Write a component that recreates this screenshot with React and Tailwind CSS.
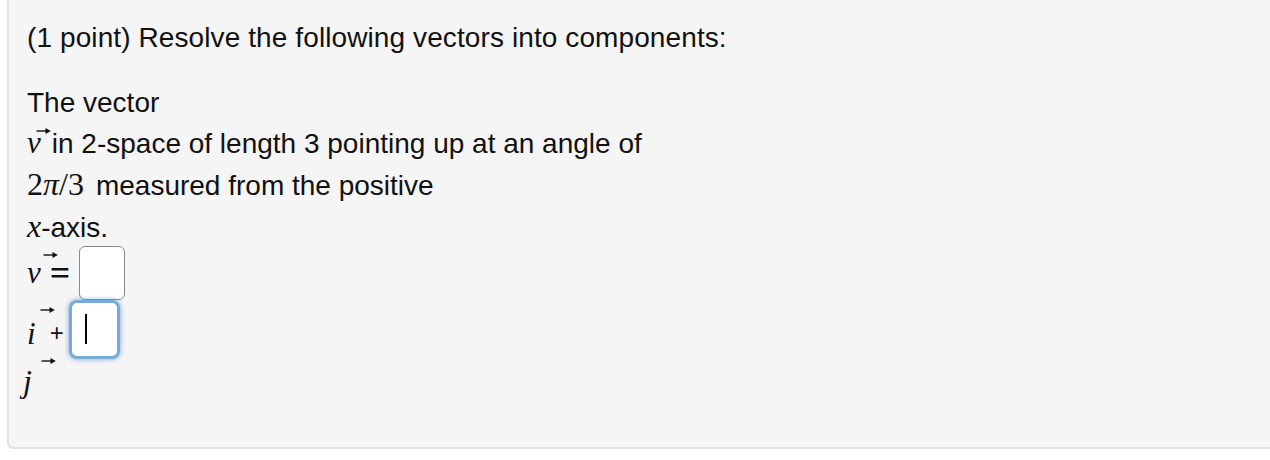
import React from 'react';

// small vector arrow, MathJax style
function Arrow({ className }) {
  return (
    <svg className={className} width="15" height="8" viewBox="0 0 15 8">
      <path d="M0.5 4H12.5" stroke="#111" strokeWidth="1.4" />
      <path d="M9.5 1L14.8 4L9.5 7Z" fill="#111" />
    </svg>
  );
}

export default function App() {
  const serif = { fontFamily: '"Liberation Serif", "Times New Roman", serif' };

  return (
    <div className="bg-white h-[460px] w-[1270px] pl-[7px]" style={{ fontFamily: '"Liberation Sans", Arial, sans-serif' }}>
      <div className="bg-[#f5f5f5] border-l-2 border-b-2 border-[#e2e2e2] rounded-bl-[6px] h-[449px] pl-[18px] pt-[18px] text-[28px] leading-[40px] text-[#111]">
        <div className="tracking-[0.1px]">(1 point) Resolve the following vectors into components:</div>

        <div className="mt-[25px]">
          <div>The vector</div>

          <div className="flex items-baseline">
            <span className="relative italic text-[31px]" style={serif}>
              v
              <Arrow className="absolute left-[9px] top-[4px]" />
            </span>
            <span className="ml-[11px]">in 2-space of length 3 pointing up at an angle of</span>
          </div>

          <div className="flex items-baseline">
            <span className="text-[32px]" style={serif}>
              2<span className="italic">π</span>/3
            </span>
            <span className="ml-[12px]">measured from the positive</span>
          </div>

          <div className="flex items-baseline">
            <span className="italic text-[32px]" style={serif}>x</span>
            <span>-axis.</span>
          </div>
        </div>

        {/* v = [ ] */}
        <div className="flex items-center h-[55px] -mt-[3px]">
          <span className="relative italic text-[31px] leading-none" style={serif}>
            v
            <Arrow className="absolute left-[16px] -top-[6px]" />
          </span>
          <span className="ml-[9px] text-[36px] leading-none font-bold" style={serif}>=</span>
          <div className="ml-[9px] w-[46px] h-[54px] bg-white border-[1.5px] border-[#8a8a8a] rounded-[6px]" />
        </div>

        {/* i + [ ] */}
        <div className="flex items-center h-[60px] -mt-[1px]">
          <span className="relative italic text-[31px] leading-none mt-[8px]" style={serif}>
            i
            <Arrow className="absolute left-[13px] -top-[12px]" />
          </span>
          <span className="ml-[14px] text-[24px] leading-none mt-[8px]">+</span>
          <div className="ml-[5px] w-[51px] h-[59px] bg-white border-[3px] border-[#76acd6] rounded-[8px] shadow-[0_0_4px_1px_rgba(90,150,210,0.6)] flex items-center pl-[13px]">
            <div className="w-[2px] h-[30px] bg-black" />
          </div>
        </div>

        {/* j */}
        <div className="flex items-center h-[40px] -ml-[4px] mt-[2px]">
          <span className="relative italic text-[32px] leading-none" style={serif}>
            j
            <Arrow className="absolute left-[18px] -top-[8px]" />
          </span>
        </div>
      </div>
    </div>
  );
}
